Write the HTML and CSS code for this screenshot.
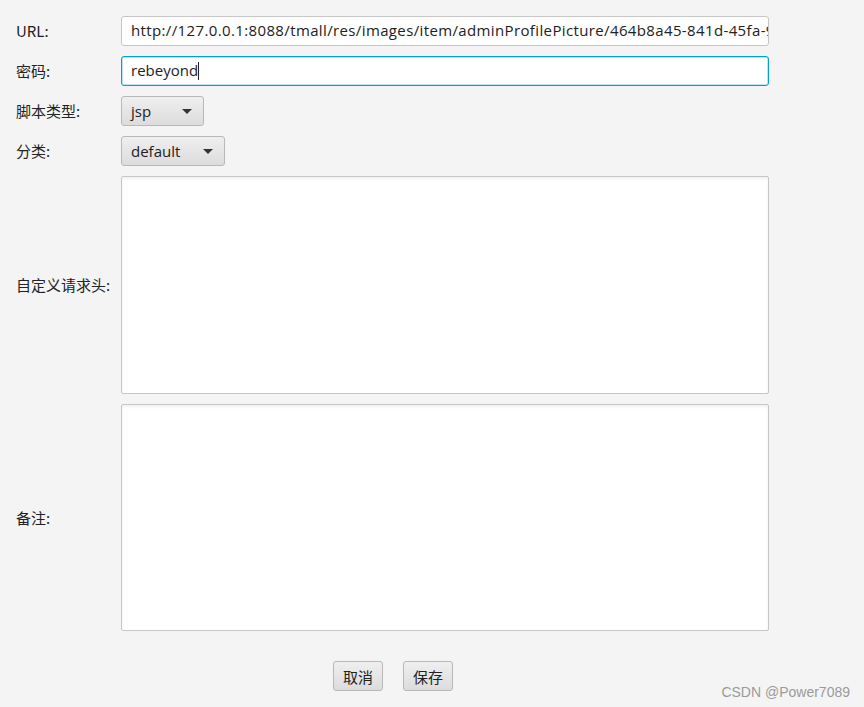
FILE: index.html
```html
<!DOCTYPE html>
<html>
<head>
<meta charset="utf-8">
<link rel="stylesheet" href="styles.css">
</head>
<body>
<div class="page">
  <div class="form">
    <label class="lbl">URL:</label>
    <div class="field url">http://127.0.0.1:8088/tmall/res/images/item/adminProfilePicture/464b8a45-841d-45fa-9</div>

    <label class="lbl cjk">密码:</label>
    <div class="field focused">rebeyond<span class="caret"></span></div>

    <label class="lbl cjk">脚本类型:</label>
    <div class="cell"><div class="combo w-jsp"><span>jsp</span><i class="arrow"></i></div></div>

    <label class="lbl cjk">分类:</label>
    <div class="cell"><div class="combo w-def"><span>default</span><i class="arrow"></i></div></div>

    <label class="lbl cjk">自定义请求头:</label>
    <div class="area"></div>

    <label class="lbl cjk">备注:</label>
    <div class="area"></div>
  </div>
  <div class="actions">
    <button class="btn">取消</button>
    <button class="btn">保存</button>
  </div>
  <div class="mark">CSDN @Power7089</div>
</div>
</body>
</html>
```
FILE: styles.css
```css
html, body {
  margin: 0;
  padding: 0;
  background: #f4f4f4;
}
.page {
  position: relative;
  width: 864px;
  height: 707px;
  box-sizing: border-box;
  padding-top: 16px;
  font-family: "Open Sans", "Noto Sans CJK SC", sans-serif;
  color: #333;
}
.form {
  display: grid;
  grid-template-columns: 105px 648px;
  grid-template-rows: 30px 30px 30px 30px 218px 227px;
  row-gap: 10px;
  padding-left: 16px;
}
.lbl {
  display: flex;
  align-items: center;
  font-family: "Noto Sans CJK SC", "Open Sans", sans-serif;
  font-size: 15px;
  color: #222;
  padding-bottom: 1px;
}
.field {
  box-sizing: border-box;
  height: 30px;
  background: #fff;
  border: 1px solid #c6c6c6;
  border-radius: 3px;
  padding: 0 0 0 9px;
  font-size: 15px;
  line-height: 27px;
  white-space: nowrap;
  overflow: hidden;
  color: #222;
}
.field.url {
  letter-spacing: 0.37px;
}
.field.focused {
  border: 1px solid #039ed3;
  box-shadow: 0 0 0 1px #bfe3f3 inset;
}
.caret {
  display: inline-block;
  width: 1px;
  height: 18px;
  background: #222;
  vertical-align: -4px;
}
.cell {
  display: flex;
  align-items: stretch;
}
.combo {
  box-sizing: border-box;
  display: flex;
  align-items: center;
  justify-content: space-between;
  height: 30px;
  padding: 0 11px 1px 9px;
  border: 1px solid #b8b8b8;
  border-radius: 3px;
  background: linear-gradient(#efefef, #dcdcdc);
  font-size: 15px;
  color: #222;
}
.w-jsp { width: 83px; }
.w-def { width: 104px; }
.arrow {
  width: 0;
  height: 0;
  border-left: 5px solid transparent;
  border-right: 5px solid transparent;
  border-top: 5px solid #333;
  margin-top: 2px;
}
.area {
  box-sizing: border-box;
  background: #fff;
  border: 1px solid #c6c6c6;
  border-radius: 2px;
  box-shadow: inset 0 2px 3px rgba(0,0,0,0.06);
}
.actions {
  display: flex;
  gap: 20px;
  padding-left: 333px;
  margin-top: 30px;
}
.btn {
  box-sizing: border-box;
  width: 50px;
  height: 30px;
  border: 1px solid #b8b8b8;
  border-radius: 3px;
  background: linear-gradient(#efefef, #dcdcdc);
  font-family: "Noto Sans CJK SC", sans-serif;
  font-size: 15px;
  color: #222;
  padding: 0;
}
.mark {
  position: absolute;
  right: 14px;
  bottom: 7px;
  font-family: "Liberation Sans", Arial, sans-serif;
  font-size: 14px;
  color: #9a9a9a;
}
```
